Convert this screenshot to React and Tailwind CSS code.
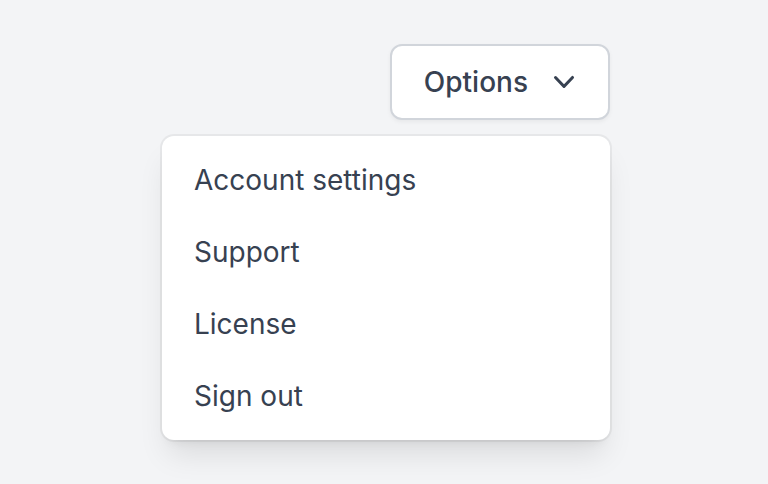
export default function App() {
  return (
    <div
      className="min-h-[484px] w-full bg-[#f3f4f6] flex justify-end pr-[158px] pt-[44px]"
      style={{ fontFamily: "Inter, 'Noto Sans', sans-serif" }}
    >
      <div className="relative inline-block text-left">
        {/* Trigger */}
        <button className="inline-flex items-center justify-center rounded-[12px] border-2 border-[#d1d5db] bg-white px-8 py-4 text-[28px] leading-[40px] font-medium text-[#374151] shadow-[0_2px_4px_rgba(0,0,0,0.05)]">
          Options
          <svg
            className="ml-4 -mr-2 h-10 w-10"
            viewBox="0 0 20 20"
            fill="currentColor"
            aria-hidden="true"
          >
            <path
              fillRule="evenodd"
              d="M5.23 7.21a.75.75 0 011.06.02L10 11.168l3.71-3.938a.75.75 0 111.08 1.04l-4.25 4.5a.75.75 0 01-1.08 0l-4.25-4.5a.75.75 0 01.02-1.06z"
              clipRule="evenodd"
            />
          </svg>
        </button>

        {/* Menu */}
        <div className="absolute right-0 mt-4 w-[448px] rounded-[12px] bg-white ring-2 ring-black/5 shadow-[0_20px_30px_-6px_rgba(0,0,0,0.1),0_8px_12px_-8px_rgba(0,0,0,0.1)]">
          <div className="py-2">
            {["Account settings", "Support", "License", "Sign out"].map(
              (item) => (
                <a
                  key={item}
                  href="#"
                  className="block px-8 py-4 text-[28px] leading-[40px] text-[#374151]"
                >
                  {item}
                </a>
              )
            )}
          </div>
        </div>
      </div>
    </div>
  );
}
